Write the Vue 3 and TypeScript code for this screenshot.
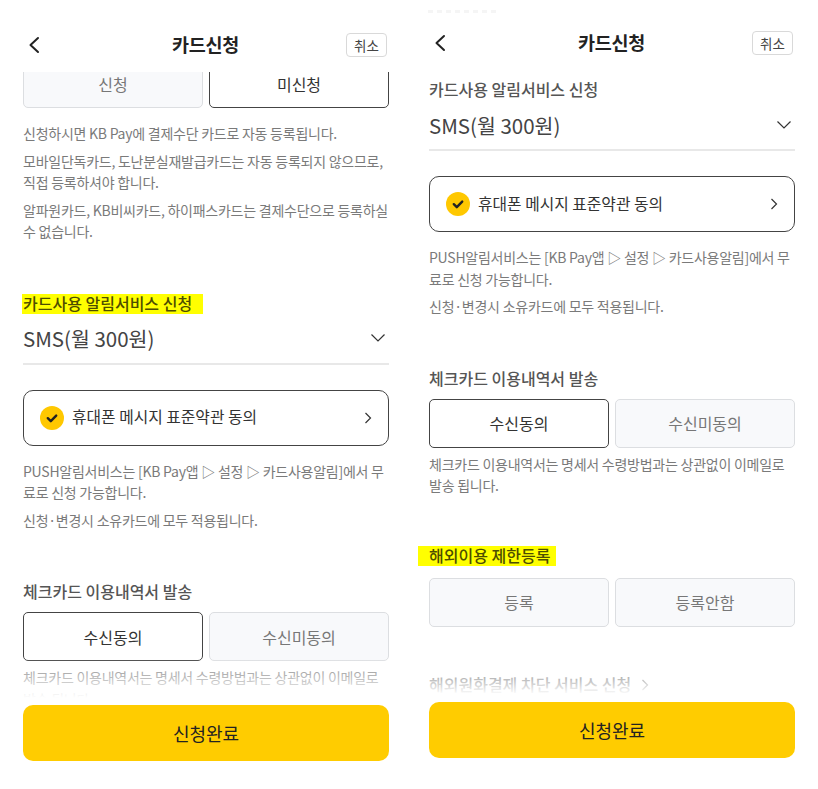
<script setup lang="ts">
const agreeLabel = '휴대폰 메시지 표준약관 동의'
const pushLines = [
  'PUSH알림서비스는 [KB Pay앱 ▷ 설정 ▷ 카드사용알림]에서 무료로 신청 가능합니다.',
  '신청·변경시 소유카드에 모두 적용됩니다.',
]
const payLines = [
  '신청하시면 KB Pay에 결제수단 카드로 자동 등록됩니다.',
  '모바일단독카드, 도난분실재발급카드는 자동 등록되지 않으므로, 직접 등록하셔야 합니다.',
  '알파원카드, KB비씨카드, 하이패스카드는 결제수단으로 등록하실 수 없습니다.',
]
const statementNote = '체크카드 이용내역서는 명세서 수령방법과는 상관없이 이메일로 발송 됩니다.'
</script>

<template>
  <div class="page">
    <section class="panel panel-left">
      <header class="head">
        <svg class="back" viewBox="0 0 14 18" width="14" height="18" aria-hidden="true"><path d="M11 2 3.5 9l7.5 7" /></svg>
        <h1 class="title">카드신청</h1>
        <button class="cancel">취소</button>
      </header>
      <div class="scroll">
        <div class="content content-left">
          <div class="choices">
            <div class="choice">신청</div>
            <div class="choice on">미신청</div>
          </div>
          <div class="notes">
            <p v-for="line in payLines" :key="line">{{ line }}</p>
          </div>

          <h2 class="label gap-a"><span class="mark mark-left">카드사용 알림서비스 신청</span></h2>
          <div class="select">
            <span>SMS(월 300원)</span>
            <svg viewBox="0 0 16 10" width="16" height="10" aria-hidden="true"><path d="M1.5 1.5 8 8l6.5-6.5" /></svg>
          </div>
          <div class="agree">
            <span class="tick"><svg viewBox="0 0 24 24" width="24" height="24" aria-hidden="true"><path d="M7.8 12.2l3 3 5.4-5.6" /></svg></span>
            <span class="agree-text">{{ agreeLabel }}</span>
            <svg class="more" viewBox="0 0 8 12" width="8" height="12" aria-hidden="true"><path d="M1.5 1 6.5 6l-5 5" /></svg>
          </div>
          <div class="notes">
            <p v-for="line in pushLines" :key="line">{{ line }}</p>
          </div>

          <h2 class="label gap-b">체크카드 이용내역서 발송</h2>
          <div class="choices tight">
            <div class="choice on">수신동의</div>
            <div class="choice">수신미동의</div>
          </div>
          <div class="notes close">
            <p>{{ statementNote }}</p>
          </div>
        </div>
        <div class="fade"></div>
      </div>
      <div class="foot foot-left"><button class="submit">신청완료</button></div>
    </section>

    <section class="panel panel-right">
      <div class="ghost"></div>
      <header class="head head-right">
        <svg class="back" viewBox="0 0 14 18" width="14" height="18" aria-hidden="true"><path d="M11 2 3.5 9l7.5 7" /></svg>
        <h1 class="title">카드신청</h1>
        <button class="cancel">취소</button>
      </header>
      <div class="scroll">
        <div class="content content-right">
          <h2 class="label">카드사용 알림서비스 신청</h2>
          <div class="select">
            <span>SMS(월 300원)</span>
            <svg viewBox="0 0 16 10" width="16" height="10" aria-hidden="true"><path d="M1.5 1.5 8 8l6.5-6.5" /></svg>
          </div>
          <div class="agree">
            <span class="tick"><svg viewBox="0 0 24 24" width="24" height="24" aria-hidden="true"><path d="M7.8 12.2l3 3 5.4-5.6" /></svg></span>
            <span class="agree-text">{{ agreeLabel }}</span>
            <svg class="more" viewBox="0 0 8 12" width="8" height="12" aria-hidden="true"><path d="M1.5 1 6.5 6l-5 5" /></svg>
          </div>
          <div class="notes">
            <p v-for="line in pushLines" :key="line">{{ line }}</p>
          </div>

          <h2 class="label gap-b">체크카드 이용내역서 발송</h2>
          <div class="choices tight">
            <div class="choice on">수신동의</div>
            <div class="choice">수신미동의</div>
          </div>
          <div class="notes close">
            <p>{{ statementNote }}</p>
          </div>

          <h2 class="label gap-c"><span class="mark mark-right">해외이용 제한등록</span></h2>
          <div class="choices tight">
            <div class="choice">등록</div>
            <div class="choice">등록안함</div>
          </div>

          <h2 class="label gap-d link">해외원화결제 차단 서비스 신청
            <svg viewBox="0 0 8 12" width="8" height="12" aria-hidden="true"><path d="M1.5 1 6.5 6l-5 5" /></svg>
          </h2>
        </div>
        <div class="fade"></div>
      </div>
      <div class="foot foot-right"><button class="submit">신청완료</button></div>
    </section>
  </div>
</template>

<style>
html, body { background: #fff; }
</style>

<style scoped>
.page {
  display: flex;
  width: 818px;
  height: 789px;
  overflow: hidden;
  background: #fff;
  font-family: "Noto Sans CJK KR", "Noto Sans", sans-serif;
  color: #333;
}
.panel {
  display: flex;
  flex-direction: column;
  height: 789px;
  min-width: 0;
}
.panel-left { width: 406px; --pad-l: 23px; --pad-r: 17px; }
.panel-right { width: 412px; --pad-l: 23px; --pad-r: 23px; }

.ghost {
  flex: none;
  width: 68px;
  height: 3px;
  margin: 10px 0 0 22px;
  background: repeating-linear-gradient(to right, #f5f5f5 0 5px, #fff 5px 9px);
}

.head {
  display: flex;
  align-items: center;
  justify-content: space-between;
  flex: none;
  height: 24px;
  padding: 33px calc(var(--pad-r) + 2px) 15px var(--pad-l);
}
.head-right { padding-top: 18px; padding-bottom: 14px; }
.back { flex: none; margin-left: 4px; }
.back path { fill: none; stroke: #222; stroke-width: 2; stroke-linecap: round; stroke-linejoin: round; }
.title {
  margin: 0;
  font-size: 18.5px;
  font-weight: 700;
  line-height: 24px;
  letter-spacing: -0.3px;
  color: #222;
  position: relative;
  left: 12px;
  top: -1px;
}
.cancel {
  width: 41px;
  height: 24px;
  padding: 0;
  box-sizing: border-box;
  border: 1px solid #d9d9d9;
  border-radius: 4px;
  background: #fff;
  font-family: inherit;
  font-size: 13.5px;
  line-height: 20px;
  color: #444;
}

.scroll {
  flex: 1;
  min-height: 0;
  overflow: hidden;
  position: relative;
}
.content { padding: 0 var(--pad-r) 0 var(--pad-l); }
.content-left { margin-top: -13px; }
.content-right { padding-top: 9px; }
.fade {
  position: absolute;
  left: 0;
  right: 0;
  bottom: 0;
  height: 48px;
  background: linear-gradient(to bottom, rgba(255, 255, 255, 0), #fff 85%);
}

.choices {
  display: grid;
  grid-template-columns: 1fr 1fr;
  gap: 6px;
}
.choice {
  display: flex;
  align-items: center;
  justify-content: center;
  height: 49px;
  box-sizing: border-box;
  border: 1.5px solid #dcdee1;
  border-radius: 5px;
  background: #f8f9fb;
  font-size: 16px;
  color: #777;
}
.choice.on {
  border-color: #444;
  background: #fff;
  color: #333;
}
.tight { margin-top: 10px; }

.notes { margin-top: 15px; }
.notes.close { margin-top: 6px; }
.notes p {
  margin: 0 0 6px;
  font-size: 14px;
  line-height: 21.5px;
  letter-spacing: -0.25px;
  color: #7a7a7a;
}

.label {
  margin: 0;
  font-size: 16px;
  font-weight: 500;
  line-height: 22px;
  color: #555;
}
.gap-a { margin-top: 48px; }
.gap-b { margin-top: 49px; }
.gap-c { margin-top: 46px; padding-bottom: 2px; }
.gap-d { margin-top: 46px; }
.mark {
  display: inline-block;
  height: 20px;
  line-height: 18px;
  background: #ffff00;
  color: #4d4d00;
  vertical-align: top;
  margin-top: 3px;
}
.mark-left { margin-left: -1px; padding: 0 11px 0 1px; }
.mark-right { margin-left: -11px; padding: 0 6px 0 11px; }
.link svg { margin-left: 6px; }
.link svg path { fill: none; stroke: #555; stroke-width: 1.2; }

.select {
  display: flex;
  align-items: center;
  justify-content: space-between;
  height: 49px;
  padding-right: 3px;
  border-bottom: 2px solid #e8e8e8;
  font-size: 20.5px;
  color: #444;
}
.select svg path { fill: none; stroke: #333; stroke-width: 1.2; }

.agree {
  display: flex;
  align-items: center;
  height: 56px;
  margin-top: 25px;
  padding: 0 16px 0 16px;
  box-sizing: border-box;
  border: 1.5px solid #444;
  border-radius: 10px;
}
.tick {
  display: block;
  flex: none;
  width: 24px;
  height: 24px;
  border-radius: 50%;
  background: #ffc800;
}
.tick svg { display: block; }
.tick path { fill: none; stroke: #222; stroke-width: 2.4; stroke-linecap: round; stroke-linejoin: round; }
.agree-text {
  flex: 1;
  margin-left: 8px;
  padding-bottom: 2px;
  font-size: 15.8px;
  color: #333;
}
.more path { fill: none; stroke: #333; stroke-width: 1.2; }

.foot { flex: none; padding-left: var(--pad-l); padding-right: var(--pad-r); }
.foot-left { padding-bottom: 28px; }
.foot-right { padding-bottom: 31px; }
.submit {
  display: block;
  width: 100%;
  height: 56px;
  border: 0;
  border-radius: 10px;
  background: #ffcc00;
  font-family: inherit;
  font-size: 18px;
  color: #222;
}
</style>
